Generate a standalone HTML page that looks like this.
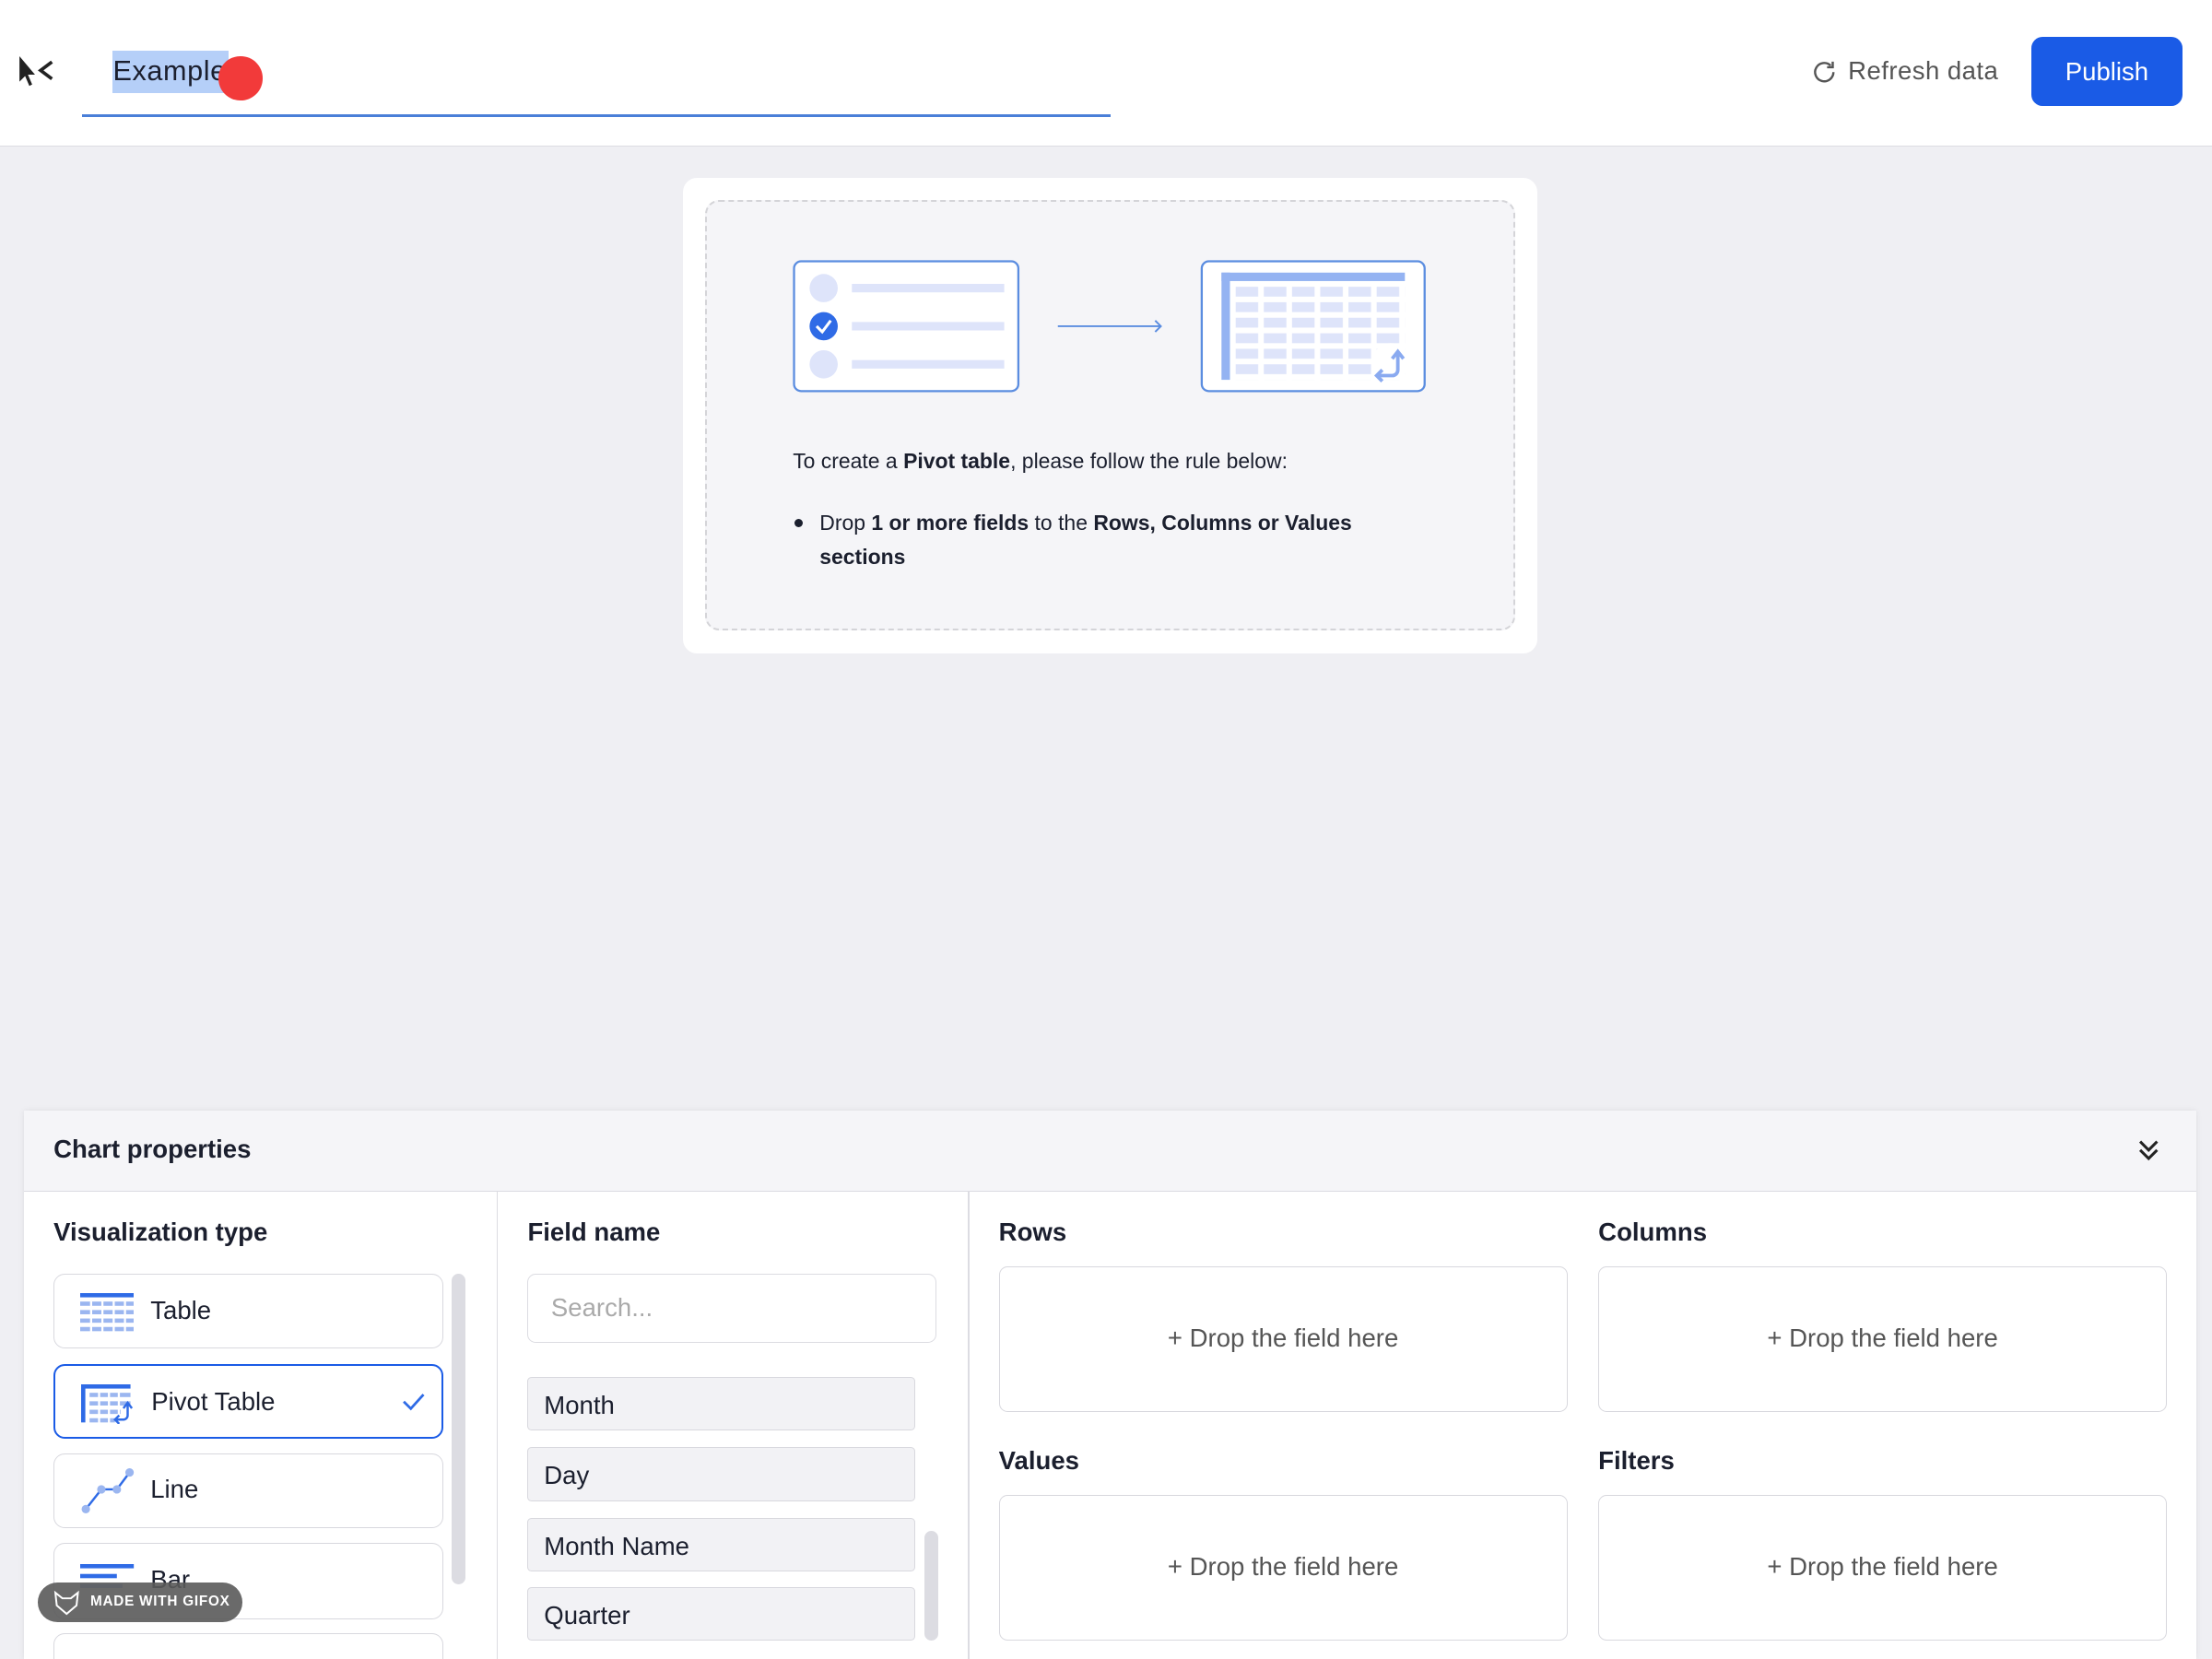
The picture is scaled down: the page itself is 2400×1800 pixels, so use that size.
<!DOCTYPE html>
<html><head><meta charset="utf-8"><style>
*{box-sizing:border-box;margin:0;padding:0}
html,body{width:2400px;height:1800px;overflow:hidden;background:#efeff3}
#w{zoom:1.530612;width:1568px;height:1176px;position:relative;font-family:"Liberation Sans",sans-serif;color:#1b1f2e}
.a{position:absolute}
.hdr{left:0;top:0;width:1568px;height:104px;background:#fff;border-bottom:1px solid #dcdce2}
.b{font-weight:bold}
.vi{position:absolute;left:38px;width:276px;height:53px;border:1px solid #d8d8de;border-radius:8px;background:#fff;font-size:18px}
.vi span{position:absolute;left:68px;top:15px}
.fi{position:absolute;left:374px;width:275px;height:38px;border:1px solid #d8d8de;border-radius:3px;background:#f2f2f5;font-size:18px;padding:9px 11px}
.dz{position:absolute;width:403px;height:103px;border:1px solid #d8d8de;border-radius:6px;background:#fff;font-size:18px;color:#555;text-align:center;line-height:101px}
.h{position:absolute;font-size:18px;font-weight:bold}
</style></head><body><div id="w">
<div class="a hdr"></div>
<svg class="a" style="left:10px;top:38px" width="30" height="26"><path d="M4 2 L4 20 L8 16 L11 23 L13 22 L10 15 L15 15 Z" fill="#222"/><path d="M35 6 L27 12 L35 18" transform="translate(-8,0)" stroke="#222" stroke-width="2.4" fill="none"/></svg>
<div class="a" style="left:80px;top:36px;width:82px;height:30px;background:#b5cff8"></div>
<div class="a" style="left:80px;top:39px;font-size:20px;letter-spacing:0.4px">Example</div>
<div class="a" style="left:155px;top:40px;width:31px;height:31px;border-radius:50%;background:#f23a3a"></div>
<div class="a" style="left:58px;top:81px;width:729px;height:2px;background:#4a7fd8"></div>
<svg class="a" style="left:1283px;top:41px" width="20" height="20" viewBox="0 0 20 20"><path d="M16.5 10a6.5 6.5 0 1 1-2-4.7M16 2.5v4h-4" stroke="#555" stroke-width="1.6" fill="none"/></svg>
<div class="a" style="left:1310px;top:40px;font-size:18px;color:#555;letter-spacing:0.3px">Refresh data</div>
<div class="a" style="left:1440px;top:26px;width:107px;height:49px;background:#1a5be6;border-radius:8px;color:#fff;font-size:18px;text-align:center;line-height:49px">Publish</div>

<div class="a" style="left:484px;top:126px;width:606px;height:337px;background:#fff;border-radius:10px"></div>
<div class="a" style="left:500px;top:142px;width:574px;height:305px;background:#f5f5f8;border:1.5px dashed #d4d4d8;border-radius:10px"></div>
<svg class="a" style="left:562px;top:184px" width="450" height="95">
<defs><pattern id="g" x="314" y="19" width="20" height="11" patternUnits="userSpaceOnUse"><rect width="16" height="7" fill="#dee4fa"/></pattern></defs>
<rect x="1" y="1" width="159" height="92" rx="5" fill="#fff" stroke="#5b8de0" stroke-width="1.5"/>
<circle cx="22" cy="20" r="10" fill="#dee4fa"/><rect x="42" y="17" width="108" height="6" fill="#dee4fa"/>
<circle cx="22" cy="47" r="10" fill="#2f6be6"/><path d="M17 47l4 4 6-8" stroke="#fff" stroke-width="2" fill="none"/><rect x="42" y="44" width="108" height="6" fill="#dee4fa"/>
<circle cx="22" cy="74" r="10" fill="#dee4fa"/><rect x="42" y="71" width="108" height="6" fill="#dee4fa"/>
<path d="M188 47h73M257 43l4 4-4 4" stroke="#5b8de0" stroke-width="1.3" fill="none"/>
<rect x="290" y="1" width="158" height="92" rx="5" fill="#fff" stroke="#5b8de0" stroke-width="1.5"/>
<rect x="304" y="9" width="130" height="6" fill="#94b3f2"/><rect x="304" y="9" width="6" height="76" fill="#94b3f2"/>
<rect x="314" y="19" width="120" height="66" fill="url(#g)"/>
<circle cx="424" cy="72" r="13" fill="#fff"/>
<path d="M429 66v12a4 4 0 0 1-4 4h-10M425 70l4-5 4 5M418 78l-4 4 4 4" stroke="#8aaaf0" stroke-width="2.5" fill="none"/>
</svg>
<div class="a" style="left:562px;top:318px;font-size:15px">To create a <b>Pivot table</b>, please follow the rule below:</div>
<div class="a" style="left:563px;top:368px;width:6px;height:6px;border-radius:50%;background:#1b1f2e"></div>
<div class="a" style="left:581px;top:359px;font-size:15px;line-height:24px;width:410px">Drop <b>1 or more fields</b> to the <b>Rows, Columns or Values sections</b></div>

<div class="a" style="left:17px;top:787px;width:1540px;height:389px;background:#fff;box-shadow:0 0 4px rgba(0,0,0,.08)"></div>
<div class="a" style="left:17px;top:787px;width:1540px;height:58px;background:#f5f5f8;border-bottom:1px solid #dcdce2"></div>
<div class="h" style="left:38px;top:804px">Chart properties</div>
<svg class="a" style="left:1515px;top:806px" width="16" height="18"><path d="M2 3l6 6 6-6M2 9l6 6 6-6" stroke="#222" stroke-width="2" fill="none"/></svg>
<div class="a" style="left:352px;top:845px;width:1px;height:331px;background:#dcdce2"></div>
<div class="a" style="left:686px;top:845px;width:1px;height:331px;background:#dcdce2"></div>
<div class="h" style="left:38px;top:863px">Visualization type</div>
<div class="h" style="left:374px;top:863px">Field name</div>
<div class="h" style="left:708px;top:863px">Rows</div>
<div class="h" style="left:1133px;top:863px">Columns</div>
<div class="h" style="left:708px;top:1025px">Values</div>
<div class="h" style="left:1133px;top:1025px">Filters</div>

<div class="vi" style="top:903px"><svg class="a" style="left:18px;top:13px" width="38" height="28"><rect x="0" y="0" width="38" height="3" fill="#2f6be6"/><g fill="#9bb6f0"><rect x="0" y="6" width="38" height="3"/><rect x="0" y="12" width="38" height="3"/><rect x="0" y="18" width="38" height="3"/><rect x="0" y="24" width="38" height="3"/></g><g fill="#fff"><rect x="7" y="5" width="1.5" height="23"/><rect x="15" y="5" width="1.5" height="23"/><rect x="23" y="5" width="1.5" height="23"/><rect x="31" y="5" width="1.5" height="23"/></g></svg><span>Table</span></div>
<div class="vi" style="top:967px;border:1.5px solid #1a5be6"><svg class="a" style="left:18px;top:13px" width="38" height="28"><rect x="0" y="0" width="35" height="3" fill="#2f6be6"/><rect x="0" y="0" width="3" height="27" fill="#2f6be6"/><g fill="#9bb6f0"><rect x="6" y="6" width="29" height="3"/><rect x="6" y="12" width="29" height="3"/><rect x="6" y="18" width="22" height="3"/><rect x="6" y="24" width="18" height="3"/></g><g fill="#fff"><rect x="12" y="5" width="1.5" height="23"/><rect x="19" y="5" width="1.5" height="23"/><rect x="26" y="5" width="1.5" height="23"/></g><path d="M33 14v8a3 3 0 0 1-3 3h-5M30 17l3-4 3 4M27 22l-3 3 3 3" stroke="#2f6be6" stroke-width="1.6" fill="none"/></svg><span>Pivot Table</span><svg class="a" style="left:245px;top:18px" width="18" height="14"><path d="M2 7l5 5 9-10" stroke="#2f6be6" stroke-width="1.8" fill="none"/></svg></div>
<div class="vi" style="top:1030px"><svg class="a" style="left:18px;top:10px" width="40" height="34"><path d="M4 29L15 15H26L35 3" stroke="#2f6be6" stroke-width="1.6" fill="none"/><g fill="#9bb6f0"><circle cx="4" cy="29" r="3"/><circle cx="15" cy="15" r="3"/><circle cx="26" cy="15" r="3"/><circle cx="35" cy="3" r="3"/></g></svg><span>Line</span></div>
<div class="vi" style="top:1094px;height:54px"><svg class="a" style="left:18px;top:14px" width="40" height="30"><rect x="0" y="0" width="38" height="3" fill="#2f6be6"/><rect x="0" y="7" width="26" height="3" fill="#2f6be6"/><rect x="0" y="14" width="30" height="3" fill="#9bb6f0"/></svg><span>Bar</span></div>
<div class="vi" style="top:1158px"></div>
<div class="a" style="left:320px;top:903px;width:10px;height:220px;border-radius:5px;background:#dcdce2"></div>

<div class="a" style="left:374px;top:903px;width:290px;height:49px;border:1px solid #dcdce2;border-radius:6px;background:#fff;font-size:18px;color:#aaa;padding:13px 16px">Search...</div>
<div class="fi" style="top:976px">Month</div>
<div class="fi" style="top:1026px">Day</div>
<div class="fi" style="top:1076px">Month Name</div>
<div class="fi" style="top:1125px">Quarter</div>
<div class="a" style="left:655px;top:1085px;width:10px;height:78px;border-radius:5px;background:#dcdce2"></div>

<div class="dz" style="left:708px;top:898px">+ Drop the field here</div>
<div class="dz" style="left:1133px;top:898px">+ Drop the field here</div>
<div class="dz" style="left:708px;top:1060px">+ Drop the field here</div>
<div class="dz" style="left:1133px;top:1060px">+ Drop the field here</div>

<div class="a" style="left:27px;top:1122px;width:145px;height:28px;border-radius:14px;background:rgba(90,90,90,.9);color:#fff;font-size:10px;font-weight:bold;line-height:28px;padding-left:37px;letter-spacing:.5px">MADE WITH GIFOX</div>
<svg class="a" style="left:37px;top:1127px" width="20" height="18"><path d="M2 2l5 4h6l5-4-1 9-7 6-7-6z" stroke="#fff" stroke-width="1.3" fill="none"/></svg>
</div></body></html>
